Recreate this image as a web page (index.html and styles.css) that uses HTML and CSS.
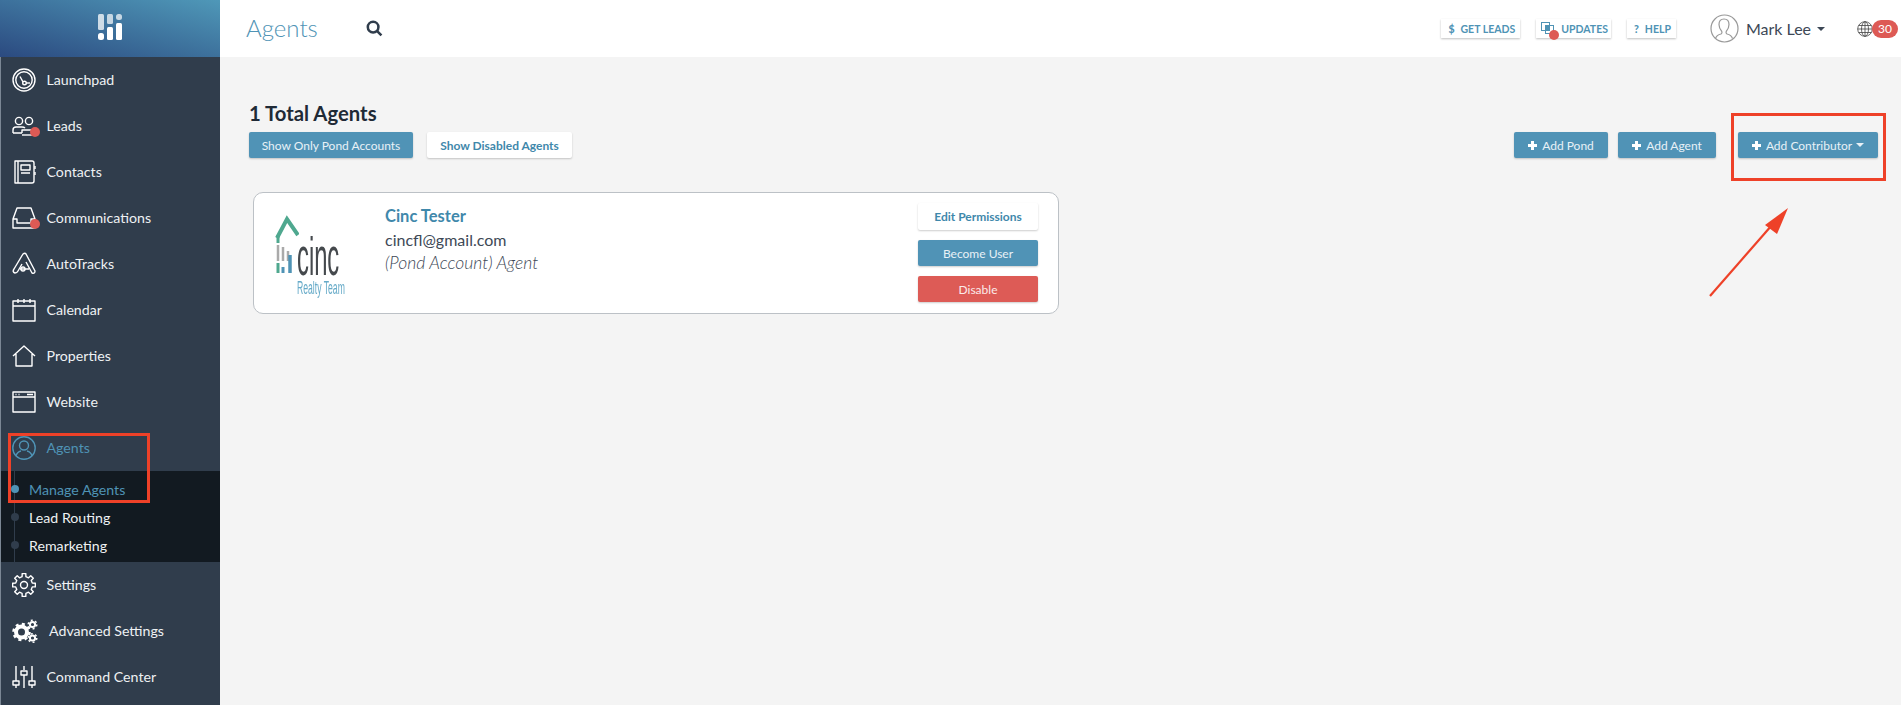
FILE: index.html
```html
<!DOCTYPE html>
<html lang="en">
<head>
    <meta charset="UTF-8">
    <title>Agents</title>
    <link rel="stylesheet" href="styles.css">
</head>
<body>

<aside class="sidebar">
    <div class="brand">
        <svg width="26" height="28" viewBox="0 0 26 28" fill="#fff">
            <rect x="1" y="1" width="6" height="16" rx="1.5" opacity=".75"/>
            <rect x="1" y="20" width="6" height="7" rx="2.5"/>
            <rect x="10" y="1" width="6" height="10" rx="1.5" opacity=".7"/>
            <rect x="10" y="14" width="6" height="13" rx="1.5"/>
            <rect x="19" y="1" width="6" height="6" rx="2.5" opacity=".7"/>
            <rect x="19" y="10" width="6" height="17" rx="1.5"/>
        </svg>
    </div>
    <nav class="menu">
        <a class="menu-item" href="#">
            <svg class="icon" viewBox="0 0 24 24"><circle cx="12" cy="12" r="11"/><circle cx="12" cy="12" r="8.2"/><path d="M8 8.5 11 14"/><circle cx="12.5" cy="15" r="1.8"/><path d="M14.5 15H18"/></svg>
            <span>Launchpad</span>
        </a>
        <a class="menu-item" href="#">
            <svg class="icon" viewBox="0 0 24 24"><circle cx="7" cy="7" r="3.6"/><circle cx="17" cy="7" r="3.6"/><path d="M1 19v-3q0-3 3-3h6q2 0 3 1M1 19h9M10 19v-3h10"/><path d="M10 21h10"/></svg>
            <span class="dot"></span>
            <span>Leads</span>
        </a>
        <a class="menu-item" href="#">
            <svg class="icon" viewBox="0 0 24 24"><path d="M3 1h17q2 0 2 2v18q0 2-2 2H3zM6 1v22"/><rect x="9" y="5" width="9" height="5"/><path d="M9 13h9M23 6v3M23 12v3"/></svg>
            <span>Contacts</span>
        </a>
        <a class="menu-item" href="#">
            <svg class="icon" viewBox="0 0 24 24"><path d="M1 13 5 2h14l4 11v9H1zM1 13h4v4h14v-4h4"/></svg>
            <span class="dot"></span>
            <span>Communications</span>
        </a>
        <a class="menu-item" href="#">
            <svg class="icon" viewBox="0 0 24 24"><path d="M2 17 11 2q2-1.500 3 0l9 17q0 3-3 2L14 10M2 17q-2 3 1 4 2 0 3-2l4-7M8 17h9"/><circle cx="11" cy="17" r="2"/></svg>
            <span>AutoTracks</span>
        </a>
        <a class="menu-item" href="#">
            <svg class="icon" viewBox="0 0 24 24"><path d="M1 3h22v20H1zM1 8h22M6 1v4M12 1v4M18 1v4"/></svg>
            <span>Calendar</span>
        </a>
        <a class="menu-item" href="#">
            <svg class="icon" viewBox="0 0 24 24"><path d="M1 12 12 2l11 10M4 10v12h16V10"/></svg>
            <span>Properties</span>
        </a>
        <a class="menu-item" href="#">
            <svg class="icon" viewBox="0 0 24 24"><rect x="1" y="2" width="22" height="20"/><path d="M1 7h22M3.5 4.500h1M6.5 4.500h1M15 4.500h6"/></svg>
            <span>Website</span>
        </a>
        <a class="menu-item active" href="#">
            <svg class="icon" viewBox="0 0 24 24"><circle cx="12" cy="12" r="11.2"/><circle cx="12" cy="9.5" r="4.5"/><path d="M4 20q1-4 5-5M20 20q-1-4-5-5"/></svg>
            <span>Agents</span>
        </a>
        <div class="submenu">
            <a class="sub-item current" href="#">Manage Agents</a>
            <a class="sub-item" href="#">Lead Routing</a>
            <a class="sub-item" href="#">Remarketing</a>
        </div>
        <a class="menu-item" href="#">
            <svg class="icon" viewBox="0 0 24 24"><path d="M10.09 3.72 10.2.64h3.6l.11 3.08 2.59 1.07 2.26-2.09 2.54 2.54-2.09 2.26 1.07 2.59 3.08.11v3.6l-3.08.11-1.07 2.59 2.09 2.26-2.54 2.54-2.26-2.09-2.59 1.07-.11 3.08h-3.6l-.11-3.08-2.59-1.07-2.26 2.09-2.54-2.54 2.09-2.26-1.07-2.59-3.08-.11v-3.6l3.08-.11 1.07-2.59-2.09-2.26 2.54-2.54 2.26 2.09z"/><circle cx="12" cy="12" r="3.5"/></svg>
            <span>Settings</span>
        </a>
        <a class="menu-item wide" href="#">
            <svg class="icon gears" viewBox="0 0 26 24">
                <circle cx="9" cy="13" r="5.5" fill="none" stroke="#fff" stroke-width="4"/>
                <circle cx="9" cy="13" r="8" fill="none" stroke="#fff" stroke-width="2.5" stroke-dasharray="3 3.3"/>
                <circle cx="20" cy="5.5" r="2.6" fill="none" stroke="#fff" stroke-width="2"/>
                <circle cx="20" cy="5.5" r="4.3" fill="none" stroke="#fff" stroke-width="1.5" stroke-dasharray="2 2.5"/>
                <circle cx="20" cy="19" r="2.6" fill="none" stroke="#fff" stroke-width="2"/>
                <circle cx="20" cy="19" r="4.3" fill="none" stroke="#fff" stroke-width="1.5" stroke-dasharray="2 2.5"/>
            </svg>
            <span>Advanced Settings</span>
        </a>
        <a class="menu-item" href="#">
            <svg class="icon" viewBox="0 0 24 24"><path d="M4 1v15M4 20v3M12 1v4M12 10v13M20 1v15M20 20v3"/><rect x="1" y="16" width="6" height="4"/><rect x="9" y="6" width="6" height="4"/><rect x="17" y="16" width="6" height="4"/></svg>
            <span>Command Center</span>
        </a>
    </nav>
</aside>

<div class="page">
    <header class="topbar">
        <h2 class="page-title">Agents</h2>
        <svg class="search" width="17" height="17" viewBox="0 0 16 16"><circle cx="6.7" cy="6.7" r="5"/><path d="M10.5 10.500 14.500 14.500"/></svg>
        <div class="top-links">
            <a class="top-btn get-leads" href="#"><b>$</b>GET LEADS</a>
            <a class="top-btn updates" href="#">
                <svg width="14" height="13" viewBox="0 0 14 13"><rect x=".5" y=".5" width="8" height="8"/><rect x="4.5" y="3.5" width="8" height="8"/><rect x="5" y="4" width="3.5" height="4" fill="#4f93b5"/></svg>
                <span class="dot"></span>
                UPDATES
            </a>
            <a class="top-btn help" href="#"><b>?</b>HELP</a>
        </div>
        <div class="user">
            <svg width="29" height="29" viewBox="0 0 29 29"><circle cx="14.5" cy="14.5" r="13.5"/><path d="M5.5 24.500q1-3.500 5.500-4.500 1.500-1 .8-2.500-2.800-3-2.800-7 0-5.500 5-5.500t5 5.500q0 4-2.800 7-.7 1.500.8 2.500 4.500 1 5.500 4.500"/></svg>
            <span>Mark Lee</span>
            <i class="caret"></i>
        </div>
        <div class="globe">
            <svg width="16" height="16" viewBox="0 0 16 16"><circle cx="8" cy="8" r="7.3"/><ellipse cx="8" cy="8" rx="3.5" ry="7.3"/><path d="M8 .7v14.600M.7 8h14.600M1.700 4.500h12.600M1.700 11.500h12.600"/></svg>
            <span class="badge">30</span>
        </div>
    </header>

    <main class="content">
        <div class="toolbar">
            <div>
                <h1>1 Total Agents</h1>
                <div class="btn-row">
                    <a class="btn primary" href="#">Show Only Pond Accounts</a>
                    <a class="btn plain" href="#">Show Disabled Agents</a>
                </div>
            </div>
            <div class="actions">
                <a class="btn primary pond" href="#"><i class="plus"></i>Add Pond</a>
                <a class="btn primary agent" href="#"><i class="plus"></i>Add Agent</a>
                <a class="btn primary contributor" href="#"><i class="plus"></i>Add Contributor<i class="caret"></i></a>
            </div>
        </div>

        <div class="agent-card">
            <div class="agent-logo">
                <svg width="24" height="70" viewBox="0 0 24 70">
                    <path d="M2 31 12 12l11 16" fill="none" stroke="#4fa88f" stroke-width="4"/>
                    <path d="M3 28v8" stroke="#4fa88f" stroke-width="3"/>
                    <path d="M3 38v16M8 40v14M13 44v10" stroke="#aaa" stroke-width="2.5"/>
                    <path d="M3 56v10" stroke="#4fa88f" stroke-width="3"/>
                    <path d="M8 60v6" stroke="#4f93b5" stroke-width="3"/>
                    <path d="M15 48v18" stroke="#4f93b5" stroke-width="3.5"/>
                </svg>
                <span class="logo-word">cinc</span>
                <span class="logo-sub">Realty Team</span>
            </div>
            <div class="agent-info">
                <a class="agent-name" href="#">Cinc Tester</a>
                <div class="agent-line">cincfl@gmail.com</div>
                <div class="agent-line role">(Pond Account) Agent</div>
            </div>
            <div class="agent-actions">
                <a class="btn plain" href="#">Edit Permissions</a>
                <a class="btn primary" href="#">Become User</a>
                <a class="btn danger" href="#">Disable</a>
            </div>
        </div>
    </main>
</div>

<!-- red markup drawn over the screenshot -->
<div class="mark mark-agents"></div>
<div class="mark mark-contributor"></div>
<svg class="mark-arrow" width="90" height="100" viewBox="0 0 90 100">
    <path d="M2 91 64 20" stroke="#ee4128" stroke-width="2.2" fill="none"/>
    <path d="M80 3 57 20 69 29z" fill="#ee4128"/>
</svg>

</body>
</html>
```

FILE: styles.css
```css
* {
    box-sizing: border-box;
}
body {
    font-family: Lato, "Open Sans", sans-serif;
    margin: 0;
    height: 705px;
    overflow: hidden;
    display: flex;
    background-color: #f4f4f4;
    color: #303d4c;
}
a {
    text-decoration: none;
}

/* Sidebar */
.sidebar {
    width: 220px;
    flex-shrink: 0;
    background-color: #303d4c;
    border-left: 1px solid #7b8794;
}
.brand {
    height: 57px;
    margin-left: -1px;
    display: flex;
    align-items: center;
    justify-content: center;
    background: linear-gradient(to top right, #2b4a80, #4f98b8);
}
.brand svg {
    margin-top: -3px;
}
.menu {
    display: flex;
    flex-direction: column;
}
.menu-item {
    position: relative;
    height: 46px;
    padding-bottom: 1px;
    display: flex;
    align-items: center;
    padding-left: 11px;
    color: #eef1f3;
    font-size: 14.2px;
}
.menu-item span:last-child {
    margin-left: 10.5px;
}
.menu-item.wide span:last-child {
    margin-left: 11px;
}
.icon {
    width: 24px;
    height: 24px;
    fill: none;
    stroke: #fff;
    stroke-width: 1.4;
    stroke-linejoin: round;
    flex-shrink: 0;
}
.icon.gears {
    width: 27px;
    margin-right: -1px;
}
.menu-item .dot {
    position: absolute;
    left: 29px;
    top: 24px;
}
.dot {
    width: 10px;
    height: 10px;
    border-radius: 50%;
    background-color: #dd5a55;
}
.menu-item.active {
    color: #4f93b5;
}
.menu-item.active .icon {
    stroke: #4f93b5;
}
.submenu {
    height: 91px;
    padding-top: 4px;
    background-color: #121a21;
    display: flex;
    flex-direction: column;
    position: relative;
}
.submenu::before {
    content: "";
    position: absolute;
    left: 13px;
    top: 0;
    bottom: 0;
    width: 1px;
    background-color: #303d4c;
}
.sub-item {
    position: relative;
    height: 28px;
    display: flex;
    align-items: center;
    padding-left: 28px;
    color: #eef1f3;
    font-size: 14.2px;
}
.sub-item::before {
    content: "";
    position: absolute;
    left: 10px;
    top: 10px;
    width: 8px;
    height: 8px;
    border-radius: 50%;
    background-color: #303d4c;
}
.sub-item.current {
    color: #4f93b5;
}
.sub-item.current::before {
    background-color: #4f93b5;
}

/* Top bar */
.page {
    flex: 1;
    min-width: 0;
}
.topbar {
    height: 57px;
    background-color: #fff;
    display: flex;
    align-items: center;
    padding-left: 26px;
}
.page-title {
    margin: 0 0 3px;
    width: 120px;
    font-size: 24px;
    font-weight: 300;
    color: #4f93b5;
}
.search {
    fill: none;
    stroke: #303d4c;
    stroke-width: 2.4;
    margin-top: -1px;
}
.top-links {
    margin-left: auto;
    display: flex;
    gap: 16px;
}
.top-btn {
    height: 19px;
    display: flex;
    align-items: center;
    gap: 6px;
    padding: 0 5px 0 7px;
    background-color: #fff;
    box-shadow: 0 1px 2px rgba(0,0,0,0.25);
    color: #4f93b5;
    font-size: 10.5px;
    font-weight: 700;
    position: relative;
}
.top-btn.updates svg {
    fill: none;
    stroke: #4f93b5;
    stroke-width: 1;
}
.top-btn.updates .dot {
    position: absolute;
    left: 13px;
    top: 11px;
}
.top-btn.updates {
    padding: 0 3px 0 5px;
    gap: 6px;
}
.user {
    display: flex;
    align-items: center;
    margin-left: 34px;
    font-size: 16px;
    color: #3d4856;
}
.user svg {
    fill: none;
    stroke: #999;
    stroke-width: 1.2;
    margin-right: 7px;
}
.caret {
    display: inline-block;
    width: 0;
    height: 0;
    margin-left: 6px;
    border-top: 4px solid currentColor;
    border-left: 4px solid transparent;
    border-right: 4px solid transparent;
}
.globe {
    display: flex;
    align-items: center;
    margin-left: 32px;
    margin-right: 3px;
}
.globe svg {
    fill: none;
    stroke: #444;
    stroke-width: .8;
}
.badge {
    margin-left: -1px;
    height: 18px;
    padding: 0 6px;
    border-radius: 9px;
    background-color: #dd5a55;
    color: #fff;
    font-size: 12px;
    line-height: 18px;
}

/* Main content */
.content {
    padding: 44px 23px 0 29px;
}
.toolbar {
    display: flex;
    justify-content: space-between;
    align-items: flex-end;
}
h1 {
    margin: 0 0 7px;
    font-size: 20.3px;
    line-height: 24px;
    font-weight: 700;
    color: #1f2a36;
}
.btn-row {
    display: flex;
    gap: 14px;
}
.actions {
    display: flex;
    gap: 10px;
}
.btn {
    height: 26px;
    display: flex;
    align-items: center;
    justify-content: center;
    border-radius: 2px;
    font-size: 12px;
    box-shadow: 0 1px 2px rgba(0,0,0,0.2);
}
.btn-row .btn.primary {
    width: 164px;
}
.btn-row .btn.plain {
    width: 145px;
}
.primary {
    background-color: #5093b6;
    color: #e8f1f6;
}
.plain {
    background-color: #fff;
    color: #3f88ab;
    font-weight: 700;
}
.danger {
    background-color: #dd5b56;
    color: #fbeaea;
}
.pond {
    width: 94px;
}
.agent {
    width: 98px;
}
.contributor {
    width: 140px;
    margin-left: 12px;
}
.contributor .caret {
    margin-left: 4px;
}
.plus {
    position: relative;
    width: 9px;
    height: 9px;
    margin-right: 5px;
    background:
        linear-gradient(#fff, #fff) center / 3px 9px no-repeat,
        linear-gradient(#fff, #fff) center / 9px 3px no-repeat;
}

/* Agent card */
.agent-card {
    margin: 34px 0 0 4px;
    width: 806px;
    height: 122px;
    display: flex;
    background-color: #fff;
    border: 1px solid #bcc1c6;
    border-radius: 10px;
}
.agent-logo {
    position: relative;
    width: 72px;
    height: 96px;
    margin: 14px 0 0 21px;
    flex-shrink: 0;
    filter: blur(.6px);
}
.logo-word,
.logo-sub {
    position: absolute;
    left: 22px;
    font-family: "Liberation Sans", sans-serif;
    transform-origin: left center;
    white-space: nowrap;
}
.logo-word {
    top: 29px;
    font-size: 54px;
    line-height: 40px;
    color: #45494d;
    transform: scaleX(.44);
}
.logo-sub {
    top: 73px;
    font-size: 18px;
    line-height: 16px;
    color: #65aac8;
    transform: scaleX(.48);
}
.agent-info {
    margin: 12px 0 0 38px;
    flex: 1;
}
.agent-name {
    display: block;
    font-size: 16.5px;
    font-weight: 700;
    line-height: 22px;
    color: #3f88ab;
}
.agent-line {
    font-size: 16px;
    line-height: 23px;
    margin-top: 1px;
    color: #3d4856;
}
.agent-line.role {
    font-size: 17.5px;
    font-weight: 300;
    font-style: italic;
    margin-top: 0;
}
.agent-actions {
    width: 120px;
    margin: 10px 20px 0 0;
    display: flex;
    flex-direction: column;
    gap: 10px;
}
.agent-actions .btn.plain {
    height: 27px;
}

/* Red markup */
.mark {
    position: absolute;
    border: 3px solid #ee4128;
}
.mark-agents {
    left: 8px;
    top: 433px;
    width: 142px;
    height: 70px;
}
.mark-contributor {
    left: 1731px;
    top: 113px;
    width: 155px;
    height: 68px;
}
.mark-arrow {
    position: absolute;
    left: 1708px;
    top: 205px;
}
```
